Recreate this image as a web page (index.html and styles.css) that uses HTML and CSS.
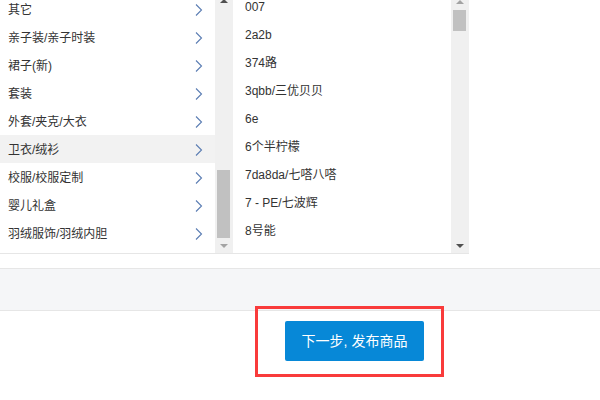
FILE: index.html
```html
<!DOCTYPE html>
<html lang="zh-CN">
<head>
<meta charset="utf-8">
<title>选择类目</title>
<link rel="stylesheet" href="styles.css">
</head>
<body>
<div class="selector">
  <div class="col col-left">
    <ul class="list list-left">
      <li class="row"><span>其它</span><svg class="chev" width="8" height="12" viewBox="0 0 8 12"><polyline points="1,0.5 6.5,6 1,11.5"/></svg></li>
      <li class="row"><span>亲子装/亲子时装</span><svg class="chev" width="8" height="12" viewBox="0 0 8 12"><polyline points="1,0.5 6.5,6 1,11.5"/></svg></li>
      <li class="row"><span>裙子(新)</span><svg class="chev" width="8" height="12" viewBox="0 0 8 12"><polyline points="1,0.5 6.5,6 1,11.5"/></svg></li>
      <li class="row"><span>套装</span><svg class="chev" width="8" height="12" viewBox="0 0 8 12"><polyline points="1,0.5 6.5,6 1,11.5"/></svg></li>
      <li class="row"><span>外套/夹克/大衣</span><svg class="chev" width="8" height="12" viewBox="0 0 8 12"><polyline points="1,0.5 6.5,6 1,11.5"/></svg></li>
      <li class="row active"><span>卫衣/绒衫</span><svg class="chev" width="8" height="12" viewBox="0 0 8 12"><polyline points="1,0.5 6.5,6 1,11.5"/></svg></li>
      <li class="row"><span>校服/校服定制</span><svg class="chev" width="8" height="12" viewBox="0 0 8 12"><polyline points="1,0.5 6.5,6 1,11.5"/></svg></li>
      <li class="row"><span>婴儿礼盒</span><svg class="chev" width="8" height="12" viewBox="0 0 8 12"><polyline points="1,0.5 6.5,6 1,11.5"/></svg></li>
      <li class="row"><span>羽绒服饰/羽绒内胆</span><svg class="chev" width="8" height="12" viewBox="0 0 8 12"><polyline points="1,0.5 6.5,6 1,11.5"/></svg></li>
    </ul>
  </div>
  <div class="scrollbar sb-left">
    <div class="sb-up dark clipped"></div>
    <div class="sb-thumb thumb-left"></div>
    <div class="sb-fill"></div>
    <div class="sb-down light"></div>
  </div>
  <div class="col col-right">
    <ul class="list list-right">
      <li class="row">007</li>
      <li class="row">2a2b</li>
      <li class="row">374路</li>
      <li class="row">3qbb/三优贝贝</li>
      <li class="row">6e</li>
      <li class="row">6个半柠檬</li>
      <li class="row">7da8da/七嗒八嗒</li>
      <li class="row">7 - PE/七波辉</li>
      <li class="row">8号能</li>
    </ul>
  </div>
  <div class="scrollbar sb-right">
    <div class="sb-up light"></div>
    <div class="sb-thumb thumb-right"></div>
    <div class="sb-fill"></div>
    <div class="sb-down dark"></div>
  </div>
</div>
<div class="band"></div>
<div class="footer">
  <button class="btn-next" type="button">下一步, 发布商品</button>
</div>
<div class="highlight-box"></div>
</body>
</html>
```
FILE: styles.css
```css
* { box-sizing: border-box; }
html, body {
  margin: 0;
  padding: 0;
  background: #fff;
}
body {
  width: 600px;
  height: 400px;
  overflow: hidden;
  position: relative;
  font-family: "Liberation Sans", "Noto Sans CJK SC", sans-serif;
  font-size: 12px;
  color: #333;
}
.selector {
  display: flex;
  width: 469px;
  height: 254px;
  border-bottom: 1px solid #e6e6e6;
}
.col {
  overflow: hidden;
  height: 253px;
}
.col-left { width: 215px; }
.col-right { width: 218px; }
.list {
  list-style: none;
  margin: 0;
  padding: 0;
}
.list-left { margin-top: -5px; }
.list-right { margin-top: -7px; }
.row {
  height: 28px;
  line-height: 14px;
  display: flex;
  align-items: center;
  white-space: nowrap;
}
.list-left .row {
  justify-content: space-between;
  padding: 2px 12px 0 8px;
}
.list-right .row { padding-left: 12px; }
.row.active { background: #f2f2f2; }
.chev {
  display: block;
  fill: none;
  stroke: #5b7db3;
  stroke-width: 1.1;
}
.scrollbar {
  width: 18px;
  height: 253px;
  background: #f0f0f0;
  display: flex;
  flex-direction: column;
  align-items: center;
}
.sb-up, .sb-down {
  width: 0;
  height: 0;
  border-left: 4px solid transparent;
  border-right: 4px solid transparent;
  flex: none;
}
.sb-up { border-bottom: 4px solid #a3a3a3; }
.sb-down { border-top: 4px solid #a3a3a3; margin-bottom: 5px; }
.sb-up.dark { border-bottom-color: #505050; }
.sb-down.dark { border-top-color: #505050; }
.sb-up.clipped { margin-top: -1px; }
.sb-thumb {
  width: 13px;
  background: #c1c1c1;
  flex: none;
  margin-left: -1px;
}
.thumb-left { margin-top: 167px; height: 68px; }
.thumb-right { margin-top: 6px; height: 21px; }
.sb-fill { flex: 1; }
.band {
  margin-top: 14px;
  height: 43px;
  background: #f5f6f8;
  border-top: 1px solid #e6e6e6;
  border-bottom: 1px solid #e6e6e6;
}
.footer {
  padding: 10px 0 0 285px;
}
.btn-next {
  display: block;
  width: 139px;
  height: 40px;
  border: 0;
  border-radius: 2px;
  background: #0788d7;
  color: #fff;
  font-family: "Liberation Sans", "Noto Sans CJK SC", sans-serif;
  font-size: 14px;
  line-height: 16px;
  padding: 0;
}
.highlight-box {
  position: absolute;
  left: 255px;
  top: 306px;
  width: 189px;
  height: 71px;
  border: 3px solid #f93b3b;
}
```
